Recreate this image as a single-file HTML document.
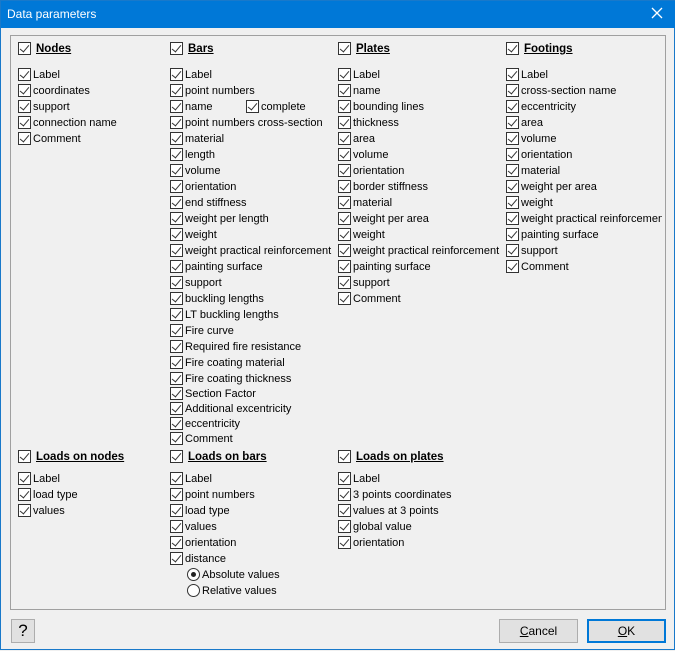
<!DOCTYPE html>
<html><head><meta charset="utf-8"><style>
*{margin:0;padding:0;box-sizing:border-box}
body{width:675px;height:650px;background:#f0f0f0;font-family:"Liberation Sans",sans-serif;font-size:11px;color:#000;position:relative;overflow:hidden}
.win{position:absolute;left:0;top:0;width:675px;height:650px;border:1px solid #1979ca}
.title{position:absolute;left:0;top:0;width:675px;height:27px;background:#0078d7;color:#fff;font-size:12px;line-height:26px;padding-left:6px}
.x{position:absolute;right:10px;top:5px;width:14px;height:14px}
.grp{position:absolute;left:9px;top:34px;width:656px;height:575px;border:1px solid #a0a0a0;overflow:hidden}
.r{position:absolute;height:14px;line-height:15px;white-space:nowrap;padding-left:15px}
.r i{position:absolute;left:0;top:0;width:13px;height:13px;border:1px solid #333;background:#fff}
.r i:after{content:"";position:absolute;left:3px;top:0px;width:4px;height:8px;border-right:1.3px solid #333;border-bottom:1.3px solid #333;transform:rotate(40deg)}
.h{padding-left:18px;font-weight:bold;text-decoration:underline;font-size:11.5px}
.rad{position:absolute;height:14px;line-height:15px;padding-left:15px;white-space:nowrap}
.rad b{position:absolute;left:0;top:0;width:13px;height:13px;border:1px solid #333;border-radius:50%;background:#fff}
.rad b.on:after{content:"";position:absolute;left:3px;top:3px;width:5px;height:5px;border-radius:50%;background:#222}
.btn{position:absolute;height:24px;border:1px solid #adadad;background:#e1e1e1;text-align:center;line-height:22px;font-size:12px}
</style></head><body><div class="win">
<div class="title">Data parameters</div>
<svg class="x" viewBox="0 0 14 14"><path d="M2 2L12 12M12 2L2 12" stroke="#fff" stroke-width="1.3"/></svg>
<div class="grp"></div>

<div class="r h" style="left:17px;top:41px"><i></i>Nodes</div>
<div class="r" style="left:17px;top:67px"><i></i>Label</div>
<div class="r" style="left:17px;top:83px"><i></i>coordinates</div>
<div class="r" style="left:17px;top:99px"><i></i>support</div>
<div class="r" style="left:17px;top:115px"><i></i>connection name</div>
<div class="r" style="left:17px;top:131px"><i></i>Comment</div>

<div class="r h" style="left:169px;top:41px"><i></i>Bars</div>
<div class="r" style="left:169px;top:67px"><i></i>Label</div>
<div class="r" style="left:169px;top:83px"><i></i>point numbers</div>
<div class="r" style="left:169px;top:99px"><i></i>name</div>
<div class="r" style="left:245px;top:99px"><i></i>complete</div>
<div class="r" style="left:169px;top:115px"><i></i>point numbers cross-section</div>
<div class="r" style="left:169px;top:131px"><i></i>material</div>
<div class="r" style="left:169px;top:147px"><i></i>length</div>
<div class="r" style="left:169px;top:163px"><i></i>volume</div>
<div class="r" style="left:169px;top:179px"><i></i>orientation</div>
<div class="r" style="left:169px;top:195px"><i></i>end stiffness</div>
<div class="r" style="left:169px;top:211px"><i></i>weight per length</div>
<div class="r" style="left:169px;top:227px"><i></i>weight</div>
<div class="r" style="left:169px;top:243px"><i></i>weight practical reinforcement</div>
<div class="r" style="left:169px;top:259px"><i></i>painting surface</div>
<div class="r" style="left:169px;top:275px"><i></i>support</div>
<div class="r" style="left:169px;top:291px"><i></i>buckling lengths</div>
<div class="r" style="left:169px;top:307px"><i></i>LT buckling lengths</div>
<div class="r" style="left:169px;top:323px"><i></i>Fire curve</div>
<div class="r" style="left:169px;top:339px"><i></i>Required fire resistance</div>
<div class="r" style="left:169px;top:355px"><i></i>Fire coating material</div>
<div class="r" style="left:169px;top:371px"><i></i>Fire coating thickness</div>
<div class="r" style="left:169px;top:386px"><i></i>Section Factor</div>
<div class="r" style="left:169px;top:401px"><i></i>Additional excentricity</div>
<div class="r" style="left:169px;top:416px"><i></i>eccentricity</div>
<div class="r" style="left:169px;top:431px"><i></i>Comment</div>

<div class="r h" style="left:337px;top:41px"><i></i>Plates</div>
<div class="r" style="left:337px;top:67px"><i></i>Label</div>
<div class="r" style="left:337px;top:83px"><i></i>name</div>
<div class="r" style="left:337px;top:99px"><i></i>bounding lines</div>
<div class="r" style="left:337px;top:115px"><i></i>thickness</div>
<div class="r" style="left:337px;top:131px"><i></i>area</div>
<div class="r" style="left:337px;top:147px"><i></i>volume</div>
<div class="r" style="left:337px;top:163px"><i></i>orientation</div>
<div class="r" style="left:337px;top:179px"><i></i>border stiffness</div>
<div class="r" style="left:337px;top:195px"><i></i>material</div>
<div class="r" style="left:337px;top:211px"><i></i>weight per area</div>
<div class="r" style="left:337px;top:227px"><i></i>weight</div>
<div class="r" style="left:337px;top:243px"><i></i>weight practical reinforcement</div>
<div class="r" style="left:337px;top:259px"><i></i>painting surface</div>
<div class="r" style="left:337px;top:275px"><i></i>support</div>
<div class="r" style="left:337px;top:291px"><i></i>Comment</div>

<div style="position:absolute;left:0;top:0;width:661px;height:650px;overflow:hidden">
<div class="r h" style="left:505px;top:41px"><i></i>Footings</div>
<div class="r" style="left:505px;top:67px"><i></i>Label</div>
<div class="r" style="left:505px;top:83px"><i></i>cross-section name</div>
<div class="r" style="left:505px;top:99px"><i></i>eccentricity</div>
<div class="r" style="left:505px;top:115px"><i></i>area</div>
<div class="r" style="left:505px;top:131px"><i></i>volume</div>
<div class="r" style="left:505px;top:147px"><i></i>orientation</div>
<div class="r" style="left:505px;top:163px"><i></i>material</div>
<div class="r" style="left:505px;top:179px"><i></i>weight per area</div>
<div class="r" style="left:505px;top:195px"><i></i>weight</div>
<div class="r" style="left:505px;top:211px"><i></i>weight practical reinforcement</div>
<div class="r" style="left:505px;top:227px"><i></i>painting surface</div>
<div class="r" style="left:505px;top:243px"><i></i>support</div>
<div class="r" style="left:505px;top:259px"><i></i>Comment</div>
</div>

<div class="r h" style="left:17px;top:449px"><i></i>Loads on nodes</div>
<div class="r" style="left:17px;top:471px"><i></i>Label</div>
<div class="r" style="left:17px;top:487px"><i></i>load type</div>
<div class="r" style="left:17px;top:503px"><i></i>values</div>

<div class="r h" style="left:169px;top:449px"><i></i>Loads on bars</div>
<div class="r" style="left:169px;top:471px"><i></i>Label</div>
<div class="r" style="left:169px;top:487px"><i></i>point numbers</div>
<div class="r" style="left:169px;top:503px"><i></i>load type</div>
<div class="r" style="left:169px;top:519px"><i></i>values</div>
<div class="r" style="left:169px;top:535px"><i></i>orientation</div>
<div class="r" style="left:169px;top:551px"><i></i>distance</div>
<div class="rad" style="left:186px;top:567px"><b class="on"></b>Absolute values</div>
<div class="rad" style="left:186px;top:583px"><b></b>Relative values</div>

<div class="r h" style="left:337px;top:449px"><i></i>Loads on plates</div>
<div class="r" style="left:337px;top:471px"><i></i>Label</div>
<div class="r" style="left:337px;top:487px"><i></i>3 points coordinates</div>
<div class="r" style="left:337px;top:503px"><i></i>values at 3 points</div>
<div class="r" style="left:337px;top:519px"><i></i>global value</div>
<div class="r" style="left:337px;top:535px"><i></i>orientation</div>

<div class="btn" style="left:10px;top:618px;width:24px;font-size:17px;line-height:22px">?</div>
<div class="btn" style="left:498px;top:618px;width:79px"><u>C</u>ancel</div>
<div class="btn" style="left:586px;top:618px;width:79px;border:2px solid #0078d7;line-height:20px"><u>O</u>K</div>
</div></body></html>
